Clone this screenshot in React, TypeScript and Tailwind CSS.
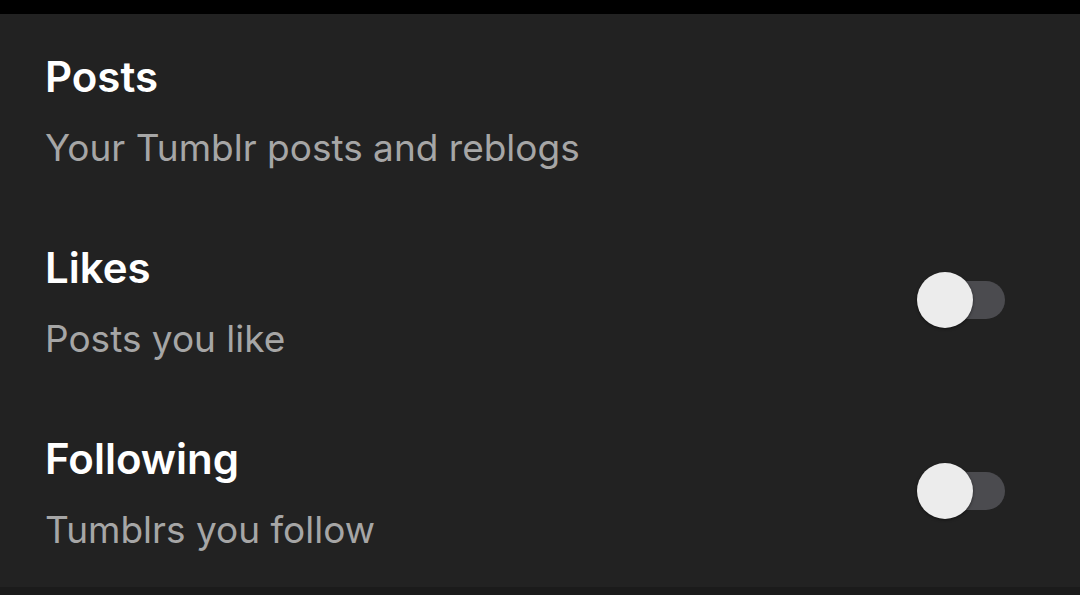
const rows = [
  { title: 'Posts', sub: 'Your Tumblr posts and reblogs', toggle: false },
  { title: 'Likes', sub: 'Posts you like', toggle: true },
  { title: 'Following', sub: 'Tumblrs you follow', toggle: true },
]

function Toggle() {
  return (
    <div className="relative mb-[5px] h-[56px] w-[88px]">
      <div className="absolute right-0 top-[9px] h-[38px] w-[80px] rounded-full bg-[#4b4b4f]" />
      <div className="absolute left-0 top-0 h-[56px] w-[56px] rounded-full bg-[#ececec] shadow-[0_1px_3px_rgba(0,0,0,0.5)]" />
    </div>
  )
}

export default function App() {
  return (
    <div className="flex h-[595px] w-[1080px] flex-col bg-[#222222]" style={{ fontFamily: 'Inter, "Noto Sans", sans-serif' }}>
      <div className="h-[14px] bg-black" />
      <div className="flex flex-col">
        {rows.map((r) => (
          <div key={r.title} className="flex items-center justify-between pb-[35px] pl-[45px] pr-[75px] pt-[39px]">
            <div className="flex flex-col gap-[25px]">
              <div className="text-[42px] font-semibold leading-[48px] text-white">{r.title}</div>
              <div className="text-[37px] leading-[44px] text-[#a6a6a6]">{r.sub}</div>
            </div>
            {r.toggle && <Toggle />}
          </div>
        ))}
      </div>
      <div className="flex-1 bg-[#1b1b1b]" />
    </div>
  )
}
